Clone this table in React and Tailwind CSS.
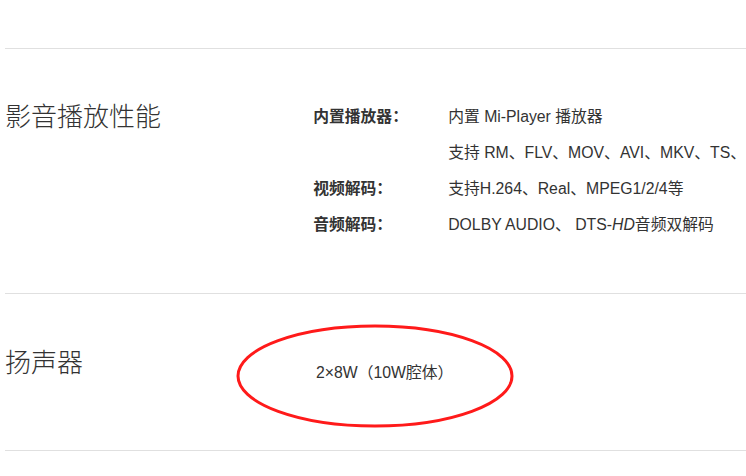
export default function App() {
  const rows = [
    { label: "内置播放器：", value: <>内置 Mi-Player 播放器</> },
    { label: "", value: <>支持 RM、FLV、MOV、AVI、MKV、TS、</> },
    { label: "视频解码：", value: <>支持H.264、Real、MPEG1/2/4等</> },
    {
      label: "音频解码：",
      value: (
        <>
          DOLBY AUDIO、 DTS-<i>HD</i>音频双解码
        </>
      ),
    },
  ];
  return (
    <div
      className="w-[746px] h-[476px] overflow-hidden bg-white text-[#333] pl-[5px]"
      style={{ fontFamily: '"Liberation Sans", Arial, "Noto Sans CJK SC", sans-serif' }}
    >
      <div className="h-[48px]" />
      <div className="border-t border-[#e0e0e0] pt-[50px] pb-[50px] flex">
        <div className="w-[311px] text-[26px] leading-[37px] font-light">影音播放性能</div>
        <div className="flex flex-col">
          {rows.map((r, i) => (
            <div key={i} className="flex h-[36px] items-center text-[15.8px] whitespace-nowrap">
              <div className="w-[135px] font-bold">{r.label}</div>
              <div>{r.value}</div>
            </div>
          ))}
        </div>
      </div>
      <div className="relative border-t border-b border-[#e0e0e0] h-[158px] pt-[51px] flex">
        <div className="w-[311px] text-[26px] leading-[36px] font-light">扬声器</div>
        <div className="pt-[10px] text-[15.8px] leading-[36px] whitespace-nowrap">2×8W（10W腔体）</div>
        <svg
          className="absolute left-[228px] top-[27px]"
          width="284"
          height="110"
          viewBox="0 0 284 110"
        >
          <ellipse cx="142" cy="55" rx="137" ry="50" fill="none" stroke="#ff1a1a" strokeWidth="3" />
        </svg>
      </div>
    </div>
  );
}
